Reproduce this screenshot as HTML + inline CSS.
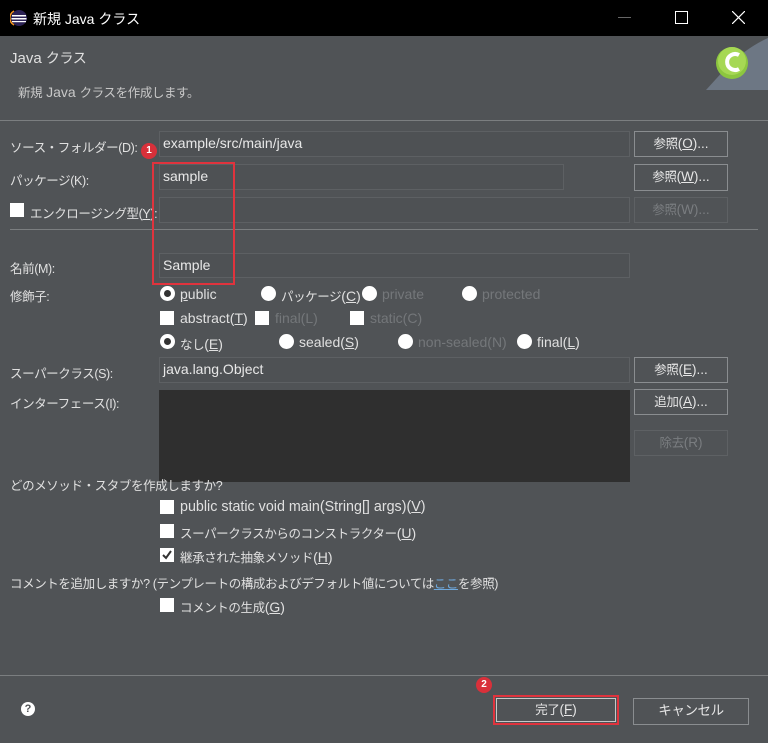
<!DOCTYPE html><html><head><meta charset="utf-8"><style>
body{margin:0;width:768px;height:743px;background:#505356;font-family:"Liberation Sans","Noto Sans CJK JP",sans-serif;font-size:14px;color:#e0e0e0;position:relative;overflow:hidden}
.a{position:absolute;white-space:nowrap}
.j{font-size:12.5px;letter-spacing:-0.4px}
.in{position:absolute;border:1px solid #5d6063;background:#4e5154;box-sizing:border-box;padding:3px 3px;font-size:14px;color:#e8e8e8}
.btn{position:absolute;border:1px solid #8a8d90;box-sizing:border-box;text-align:center;line-height:24px;color:#e6e6e6;background:#505356;font-size:13.5px}
.dis{border-color:#5e6164;color:#7a7d80}
.cb{position:absolute;width:14px;height:14px;background:#fff}
.rd{position:absolute;width:15px;height:15px;border-radius:50%;background:#fff}
.rd.on::after{content:"";position:absolute;left:4px;top:4px;width:7px;height:7px;border-radius:50%;background:#333}
.sep{position:absolute;left:0;width:768px;height:1px;background:#7b7e80}
.g{color:#74777a}
.badge{position:absolute;width:16px;height:16px;border-radius:50%;background:#d9303a;color:#fff;font-size:10px;font-weight:bold;text-align:center;line-height:16px}
u{text-decoration:underline}
.l{font-size:14.3px}
</style></head><body>
<div class="a" style="left:0;top:0;width:768px;height:36px;background:#000"></div>
<svg class="a" style="left:10px;top:9px" width="18" height="18"><circle cx="9" cy="9" r="8" fill="#2c2255"/><rect x="2" y="6" width="14" height="1.5" fill="#fff"/><rect x="1.5" y="9" width="15" height="1.5" fill="#fff"/><rect x="2" y="12" width="14" height="1.2" fill="#fff"/><path d="M4 2 A8 8 0 0 0 4 16" stroke="#f7941e" stroke-width="1.5" fill="none"/></svg>
<div class="a" style="left:33px;top:9px;color:#fff;font-size:14px">新規 Java クラス</div>
<div class="a" style="left:618px;top:17px;width:13px;height:1px;background:#666"></div>
<div class="a" style="left:675px;top:11px;width:11px;height:11px;border:1px solid #fff"></div>
<svg class="a" style="left:732px;top:11px" width="13" height="13"><path d="M0 0L13 13M13 0L0 13" stroke="#fff" stroke-width="1.2"/></svg>
<div class="a" style="left:10px;top:48px;font-size:15px">Java <span class="j" style="font-size:14px">クラス</span></div>
<div class="a" style="left:18px;top:82px;color:#c8c8c8"><span class="j">新規</span> Java <span class="j">クラスを作成します。</span></div>
<svg class="a" style="left:706px;top:36px" width="62" height="54"><path d="M0 54 L20 32 Q40 12 62 2 L62 54Z" fill="#6d7784"/><circle cx="26" cy="27" r="16" fill="#8cc63f"/><circle cx="26" cy="25" r="14" fill="#a6d854"/><path d="M33 19 A8 8 0 1 0 33 33" stroke="#fff" stroke-width="4" fill="none"/></svg>
<div class="sep" style="top:120px"></div>
<div class="a j" style="left:10px;top:137px">ソース・フォルダー(D):</div>
<div class="in" style="left:159px;top:131px;width:471px;height:26px">example/src/main/java</div>
<div class="btn" style="left:634px;top:131px;width:94px;height:26px"><span class="j">参照</span>(<u>O</u>)...</div>
<div class="a j" style="left:10px;top:170px">パッケージ(K):</div>
<div class="in" style="left:159px;top:164px;width:405px;height:26px">sample</div>
<div class="btn" style="left:634px;top:164px;width:94px;height:27px"><span class="j">参照</span>(<u>W</u>)...</div>
<div class="cb" style="left:10px;top:203px"></div>
<div class="a j" style="left:30px;top:203px">エンクロージング型(<u>Y</u>):</div>
<div class="in" style="left:159px;top:197px;width:471px;height:26px"></div>
<div class="btn dis" style="left:634px;top:197px;width:94px;height:26px"><span class="j">参照</span>(W)...</div>
<div class="sep" style="top:229px;left:10px;width:748px"></div>
<div class="a j" style="left:10px;top:258px">名前(M):</div>
<div class="in" style="left:159px;top:253px;width:471px;height:25px">Sample</div>
<div class="a" style="left:152px;top:162px;width:79px;height:119px;border:2px solid #e0333d"></div>
<div class="badge" style="left:141px;top:143px">1</div>
<div class="a j" style="left:10px;top:286px">修飾子:</div>
<div class="rd on" style="left:160px;top:286px"></div><div class="a" style="left:180px;top:286px"><u>p</u>ublic</div>
<div class="rd" style="left:261px;top:286px"></div><div class="a" style="left:281px;top:286px"><span class="j">パッケージ</span>(<u>C</u>)</div>
<div class="rd" style="left:362px;top:286px"></div><div class="a g" style="left:382px;top:286px">private</div>
<div class="rd" style="left:462px;top:286px"></div><div class="a g" style="left:482px;top:286px">protected</div>
<div class="cb" style="left:160px;top:311px"></div><div class="a" style="left:180px;top:310px">abstract(<u>T</u>)</div>
<div class="cb" style="left:255px;top:311px"></div><div class="a g" style="left:275px;top:310px">final(L)</div>
<div class="cb" style="left:350px;top:311px"></div><div class="a g" style="left:370px;top:310px">static(C)</div>
<div class="rd on" style="left:160px;top:334px"></div><div class="a" style="left:180px;top:334px"><span class="j">なし</span>(<u>E</u>)</div>
<div class="rd" style="left:279px;top:334px"></div><div class="a" style="left:299px;top:334px">sealed(<u>S</u>)</div>
<div class="rd" style="left:398px;top:334px"></div><div class="a g" style="left:418px;top:334px">non-sealed(N)</div>
<div class="rd" style="left:517px;top:334px"></div><div class="a" style="left:537px;top:334px">final(<u>L</u>)</div>
<div class="a j" style="left:10px;top:363px">スーパークラス(S):</div>
<div class="in" style="left:159px;top:357px;width:471px;height:26px">java.lang.Object</div>
<div class="btn" style="left:634px;top:357px;width:94px;height:26px"><span class="j">参照</span>(<u>E</u>)...</div>
<div class="a j" style="left:10px;top:393px">インターフェース(I):</div>
<div class="a" style="left:159px;top:390px;width:471px;height:92px;background:#2f2f2f"></div>
<div class="btn" style="left:634px;top:389px;width:94px;height:26px"><span class="j">追加</span>(<u>A</u>)...</div>
<div class="btn dis" style="left:634px;top:430px;width:94px;height:26px"><span class="j">除去</span>(R)</div>
<div class="a j" style="left:10px;top:475px">どのメソッド・スタブを作成しますか?</div>
<div class="cb" style="left:160px;top:500px"></div><div class="a l" style="left:180px;top:499px">public static void main(String[] args)(<u>V</u>)</div>
<div class="cb" style="left:160px;top:524px"></div><div class="a" style="left:180px;top:523px"><span class="j">スーパークラスからのコンストラクター</span>(<u>U</u>)</div>
<div class="cb" style="left:160px;top:548px"></div><svg class="a" style="left:161px;top:549px" width="12" height="12"><path d="M2 6L5 9L10 2" stroke="#333" stroke-width="2" fill="none"/></svg><div class="a" style="left:180px;top:547px"><span class="j">継承された抽象メソッド</span>(<u>H</u>)</div>
<div class="a j" style="left:10px;top:573px">コメントを追加しますか? (テンプレートの構成およびデフォルト値については<u style="color:#6fa8dc">ここ</u>を参照)</div>
<div class="cb" style="left:160px;top:598px"></div><div class="a" style="left:180px;top:597px"><span class="j">コメントの生成</span>(<u>G</u>)</div>
<div class="sep" style="top:675px"></div>
<div class="a" style="left:21px;top:702px;width:14px;height:14px;border-radius:50%;background:#fff;color:#505356;font-weight:bold;font-size:11px;text-align:center;line-height:14px">?</div>
<div class="badge" style="left:476px;top:677px">2</div>
<div class="a" style="left:493px;top:695px;width:126px;height:30px;border:2px solid #e0333d;box-sizing:border-box"></div>
<div class="btn" style="left:496px;top:698px;width:120px;height:24px;line-height:22px;border-color:#c8c8c8"><span class="j">完了</span>(<u>F</u>)</div>
<div class="btn j" style="left:633px;top:698px;width:116px;height:27px">キャンセル</div>
</body></html>
